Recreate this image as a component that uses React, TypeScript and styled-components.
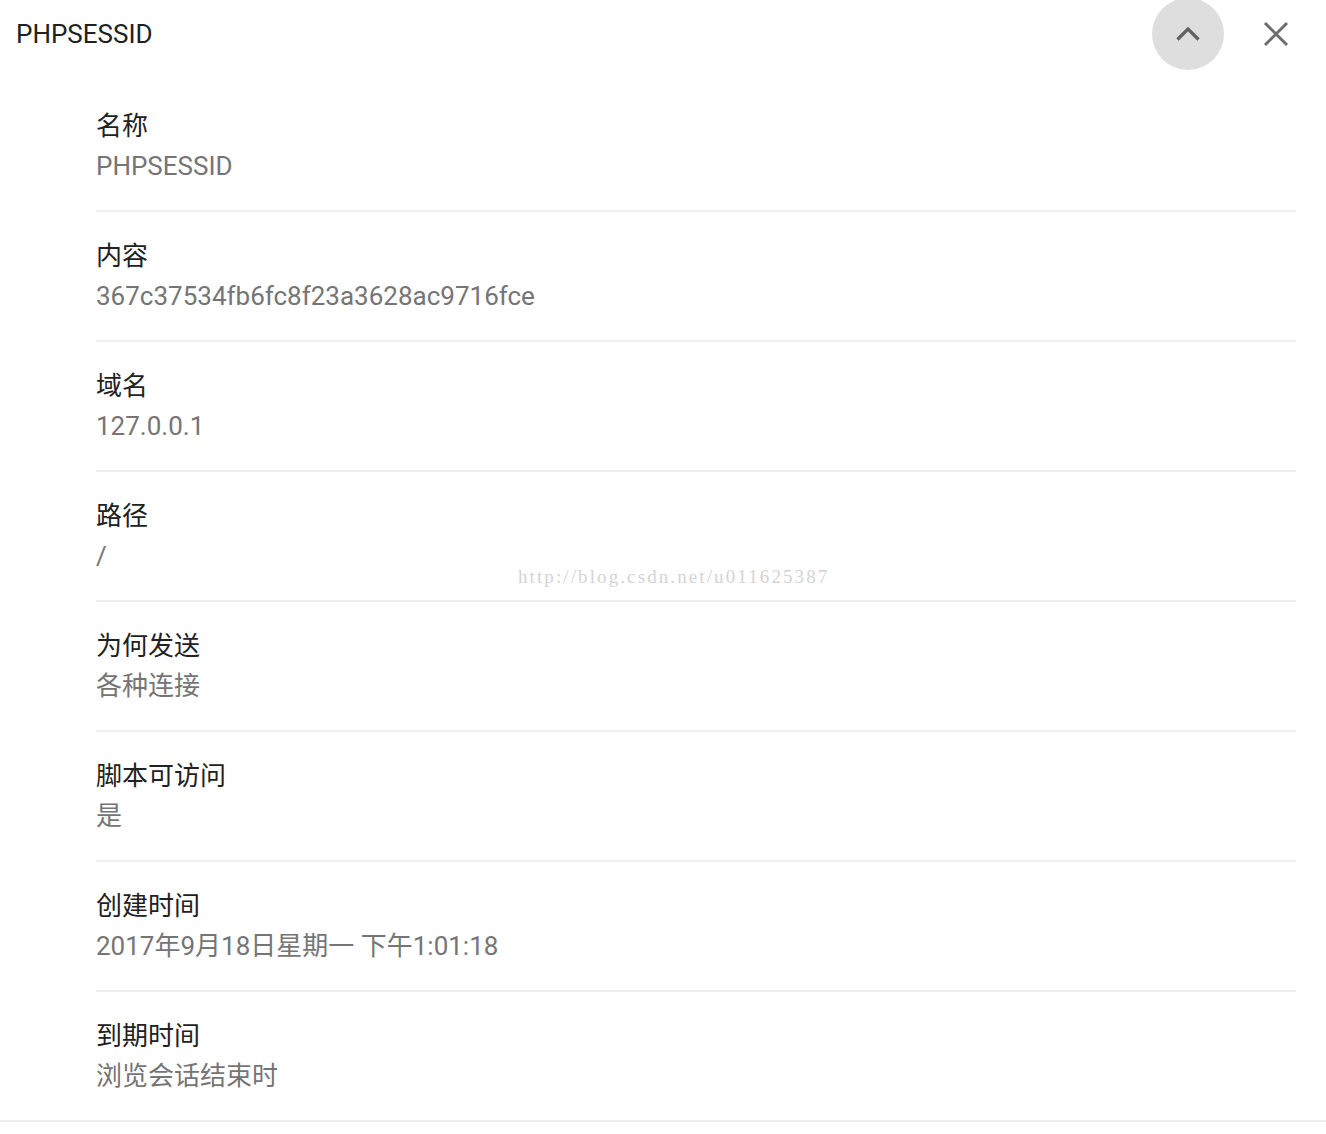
import { FC } from "react";
import styled, { createGlobalStyle } from "styled-components";

const FIELDS = [
  { label: "名称", value: "PHPSESSID" },
  { label: "内容", value: "367c37534fb6fc8f23a3628ac9716fce" },
  { label: "域名", value: "127.0.0.1" },
  { label: "路径", value: "/" },
  { label: "为何发送", value: "各种连接" },
  { label: "脚本可访问", value: "是" },
  { label: "创建时间", value: "2017年9月18日星期一 下午1:01:18" },
  { label: "到期时间", value: "浏览会话结束时" },
];

const App: FC = () => {
  return (
    <SPage>
      <GlobalStyle />
      <SHeader>
        <STitle>PHPSESSID</STitle>
        <SActions>
          <SCircleButton aria-label="collapse">
            <svg width="26" height="26" viewBox="0 0 26 26">
              <path
                d="M2.5 18.5 L13 8 L23.5 18.5"
                fill="none"
                stroke="#616161"
                strokeWidth="3.2"
              />
            </svg>
          </SCircleButton>
          <SIconButton aria-label="close">
            <svg width="26" height="26" viewBox="0 0 26 26">
              <path
                d="M2 2 L24 24 M24 2 L2 24"
                fill="none"
                stroke="#6e6e6e"
                strokeWidth="3"
              />
            </svg>
          </SIconButton>
        </SActions>
      </SHeader>

      <SList>
        {FIELDS.map((item) => (
          <SRow key={item.label}>
            <SLabel>{item.label}</SLabel>
            <SValue>{item.value}</SValue>
          </SRow>
        ))}
      </SList>

      <SWatermark>http://blog.csdn.net/u011625387</SWatermark>
    </SPage>
  );
};

const GlobalStyle = createGlobalStyle`
  html, body {
    margin: 0;
    padding: 0;
    background: #ffffff;
  }
  body {
    font-family: Roboto, "Noto Sans CJK SC", sans-serif;
  }
`;

const SPage = styled.div`
  position: relative;
  width: 1326px;
  min-height: 1134px;
  background: #ffffff;
`;

const SHeader = styled.header`
  display: flex;
  align-items: center;
  justify-content: space-between;
  height: 68px;
  padding: 0 26px 0 16px;
  margin-bottom: 14px;
`;

const STitle = styled.h1`
  margin: 0;
  font-size: 26px;
  font-weight: 400;
  color: #212121;
  line-height: 1;
`;

const SActions = styled.div`
  display: flex;
  align-items: center;
  gap: 28px;
`;

const SCircleButton = styled.button`
  display: flex;
  align-items: center;
  justify-content: center;
  width: 72px;
  height: 72px;
  border: none;
  border-radius: 50%;
  background: #dedede;
  padding: 0;
  cursor: pointer;
`;

const SIconButton = styled.button`
  display: flex;
  align-items: center;
  justify-content: center;
  width: 48px;
  height: 48px;
  border: none;
  background: transparent;
  padding: 0;
  cursor: pointer;
`;

const SList = styled.ul`
  list-style: none;
  margin: 0;
  padding: 0 30px 0 96px;
  border-bottom: solid 2px #eeeeee;
`;

const SRow = styled.li`
  padding: 24px 0;
  border-bottom: solid 2px #eeeeee;
  &:last-child {
    border-bottom: none;
  }
`;

const SLabel = styled.div`
  font-size: 26px;
  line-height: 40px;
  color: #212121;
`;

const SValue = styled.div`
  font-size: 26px;
  line-height: 40px;
  color: #757575;
`;

const SWatermark = styled.div`
  position: absolute;
  left: 518px;
  top: 566px;
  font-family: "Liberation Serif", serif;
  font-size: 19px;
  line-height: 22px;
  letter-spacing: 2.1px;
  color: #d4d4d4;
  pointer-events: none;
`;

export default App;
